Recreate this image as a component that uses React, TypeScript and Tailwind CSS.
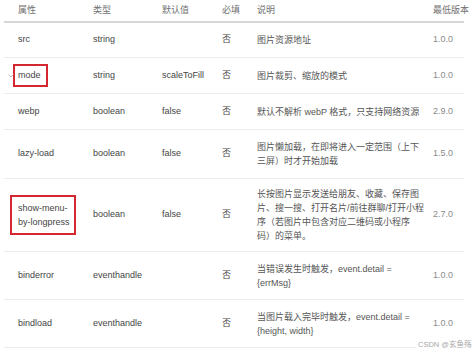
const rows = [
  { name: 'src', type: 'string', def: '', req: '否', desc: ['图片资源地址'], ver: '1.0.0', h: 'h-[35px]' },
  { name: 'mode', type: 'string', def: 'scaleToFill', req: '否', desc: ['图片裁剪、缩放的模式'], ver: '1.0.0', h: 'h-[36px]', boxed: 'small', chevron: true },
  { name: 'webp', type: 'boolean', def: 'false', req: '否', desc: ['默认不解析 webP 格式，只支持网络资源'], ver: '2.9.0', h: 'h-[36px]' },
  { name: 'lazy-load', type: 'boolean', def: 'false', req: '否', desc: ['图片懒加载，在即将进入一定范围（上下', '三屏）时才开始加载'], ver: '1.5.0', h: 'h-[49px]' },
  {
    name: 'show-menu-by-longpress',
    type: 'boolean',
    def: 'false',
    req: '否',
    desc: ['长按图片显示发送给朋友、收藏、保存图', '片、搜一搜、打开名片/前往群聊/打开小程', '序（若图片中包含对应二维码或小程序', '码）的菜单。'],
    ver: '2.7.0',
    h: 'h-[73px]',
    boxed: 'big',
  },
  { name: 'binderror', type: 'eventhandle', def: '', req: '否', desc: ['当错误发生时触发，event.detail = ', '{errMsg}'], ver: '1.0.0', h: 'h-[48px]' },
  { name: 'bindload', type: 'eventhandle', def: '', req: '否', desc: ['当图片载入完毕时触发，event.detail = ', '{height, width}'], ver: '1.0.0', h: 'h-[48px]' },
]

const grid = 'grid grid-cols-[75px_69px_60px_35px_176px_45px] items-center'

function NameCell({ row }: { row: (typeof rows)[number] }) {
  if (row.boxed === 'small') {
    return (
      <div className="relative pl-[14px]">
        {row.chevron && (
          <svg className="absolute left-[4px] top-1/2 -translate-y-1/2" width="6" height="4" viewBox="0 0 6 4">
            <path d="M0.5 0.5 L3 3 L5.5 0.5" fill="none" stroke="#b5b5b5" strokeWidth="0.9" />
          </svg>
        )}
        <span className="-ml-[5px] inline-block border-2 border-[#d42730] py-[4px] pl-[3px] pr-[5px] leading-[11px]">
          {row.name}
        </span>
      </div>
    )
  }
  if (row.boxed === 'big') {
    return (
      <div className="pl-[14px]">
        <div className="-ml-[8px] inline-block border-2 border-[#d42730] py-[4px] pl-[6px] pr-[4px] leading-[14px]">
          show-menu-
          <br />
          by-longpress
        </div>
      </div>
    )
  }
  return <div className="pl-[14px]">{row.name}</div>
}

export default function App() {
  return (
    <div
      className="relative h-[353px] w-[474px] overflow-hidden bg-white text-[9px] text-[#454545]"
      style={{ fontFamily: '"Liberation Sans", "Noto Sans CJK SC", sans-serif' }}
    >
      <div className="ml-[4px] w-[460px]">
        <div className={`${grid} h-[23px] border-b-2 border-[#d6d6d6] text-[#707070]`}>
          <div className="pl-[14px]">属性</div>
          <div className="pl-[14px]">类型</div>
          <div className="pl-[14px]">默认值</div>
          <div className="pl-[14px]">必填</div>
          <div className="pl-[14px]">说明</div>
          <div className="whitespace-nowrap pl-[14px]">最低版本</div>
        </div>
        {rows.map((row) => (
          <div key={row.name} className={`${grid} ${row.h} border-b border-[#ececec]`}>
            <NameCell row={row} />
            <div className="pl-[14px]">{row.type}</div>
            <div className="pl-[14px]">{row.def}</div>
            <div className="pl-[14px]">{row.req}</div>
            <div className="whitespace-nowrap pl-[14px] leading-[14px] text-[#555555]">
              {row.desc.map((line, i) => (
                <div key={i}>{line}</div>
              ))}
            </div>
            <div className="pl-[14px] text-[#8a8a8a]">{row.ver}</div>
          </div>
        ))}
      </div>
      <div className="absolute left-[416px] top-[340px] whitespace-nowrap bg-white px-[2px] text-[7.5px] leading-[10px] text-[#a8a8a8]">
        CSDN @玄鱼殇
      </div>
    </div>
  )
}
